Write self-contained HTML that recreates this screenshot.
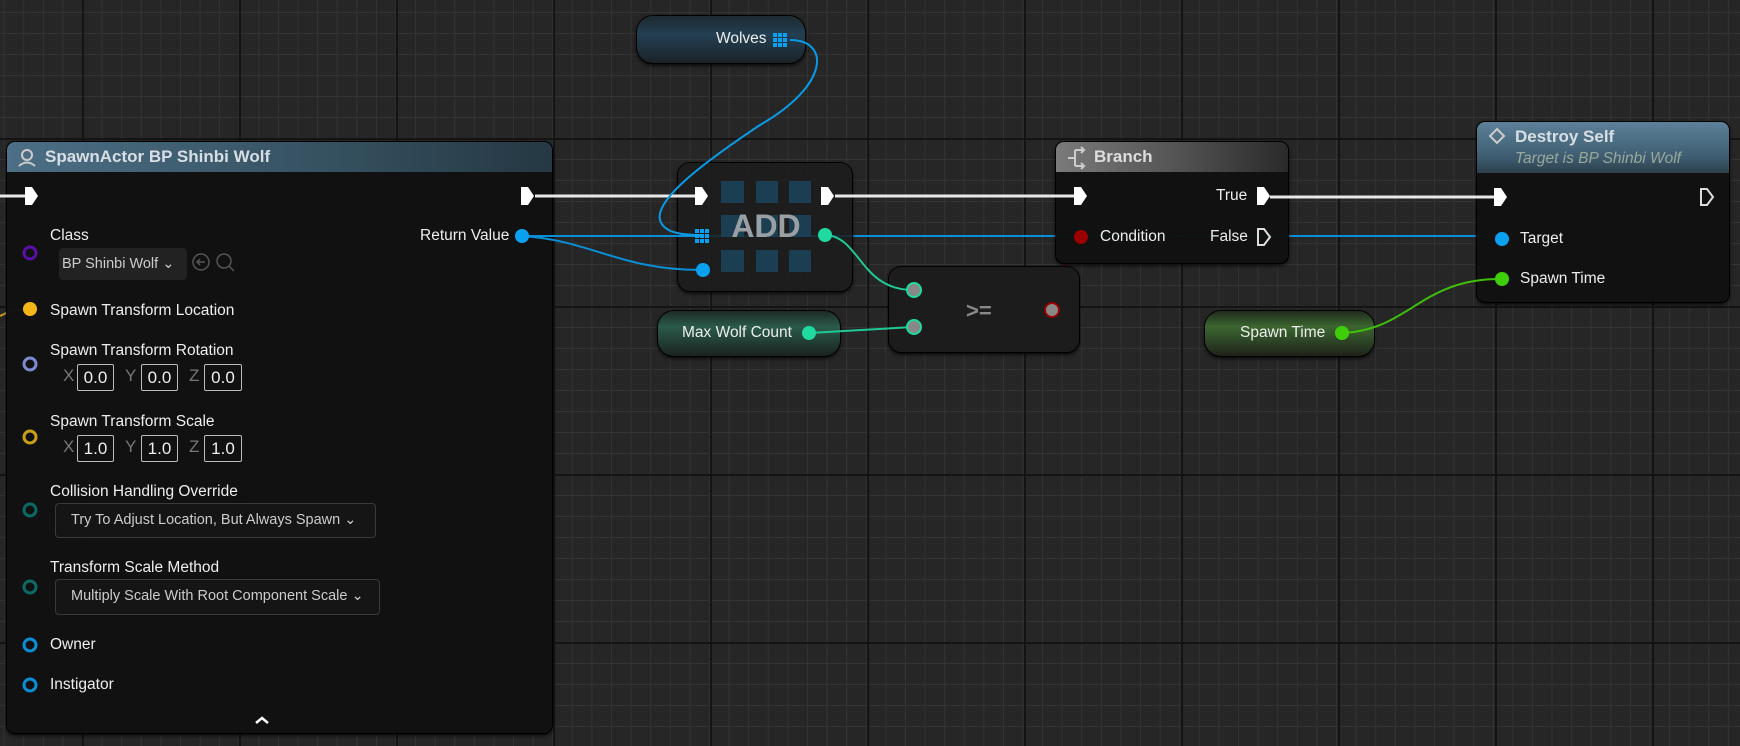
<!DOCTYPE html>
<html><head><meta charset="utf-8"><style>
*{margin:0;padding:0;box-sizing:border-box}
body{width:1740px;height:746px;overflow:hidden;position:relative;background:#262626;font-family:"Liberation Sans",sans-serif;color:#e6e6e6;
background-image:
linear-gradient(to right,#141414 2px,transparent 2px),
linear-gradient(to bottom,#141414 2px,transparent 2px),
linear-gradient(to right,#333 1px,transparent 1px),
linear-gradient(to bottom,#333 1px,transparent 1px);
background-size:157px 168px,157px 168px,19.6px 21px,19.6px 21px;
background-position:82px 0,0 138px,82px 0,0 138px;}
.n{position:absolute;background:rgba(16,17,16,.97);border-radius:8px;box-shadow:0 2px 4px #000,0 0 0 1px #000;}
.hd{position:absolute;left:0;right:0;top:0;border-radius:8px 8px 0 0;}
.t{position:absolute;font-size:15.5px;white-space:nowrap;color:#eee}
.pill{position:absolute;border-radius:16px;background:#181a19;box-shadow:0 2px 4px #000,0 0 0 1px #000;overflow:hidden}
.box{position:absolute;border:1px solid #bbb;border-radius:2px;height:27px;font-size:17px;text-align:center;line-height:25px;color:#eee}
.dd{position:absolute;border:1px solid #3a3a3a;border-radius:4px;background:#141514;font-size:14.5px;color:#ccc;padding-left:15px;line-height:33px}
svg{position:absolute;left:0;top:0}
</style></head><body>

<svg width="1740" height="746">
 <g fill="none" stroke-width="2">
  <path d="M0 316 Q10 310 25 309" stroke="#c9a020"/>
  <path d="M522 236 H1500" stroke="#0a8fd6"/>
  <path d="M1052 310 C1068 300,1060 250,1079 236" stroke="#8a0000"/>
 </g>
</svg>

<!-- SpawnActor node -->
<div class="n" style="left:7px;top:142px;width:545px;height:591px">
 <div class="hd" style="height:30px;background:linear-gradient(to right,#4c6f86,#35505f 60%,#253843)"></div>
 <div class="t" style="left:38px;top:5px;font-size:17px;font-weight:bold;color:#d8dfe4">SpawnActor BP Shinbi Wolf</div>
 <div class="t" style="left:43px;top:85px">Class</div>
 <div class="dd" style="left:52px;top:106px;width:128px;height:32px;border:none;background:#222;line-height:32px;padding-left:3px">BP Shinbi Wolf ⌄</div>
 <div class="t" style="left:43px;top:160px">Spawn Transform Location</div>
 <div class="t" style="left:43px;top:200px">Spawn Transform Rotation</div>
 <div class="t" style="left:56px;top:224px;font-size:17px;color:#777">X</div>
 <div class="box" style="left:70px;top:222px;width:37px">0.0</div>
 <div class="t" style="left:118px;top:224px;font-size:17px;color:#777">Y</div>
 <div class="box" style="left:134px;top:222px;width:37px">0.0</div>
 <div class="t" style="left:182px;top:224px;font-size:17px;color:#777">Z</div>
 <div class="box" style="left:197px;top:222px;width:38px">0.0</div>
 <div class="t" style="left:43px;top:271px">Spawn Transform Scale</div>
 <div class="t" style="left:56px;top:295px;font-size:17px;color:#777">X</div>
 <div class="box" style="left:70px;top:293px;width:37px">1.0</div>
 <div class="t" style="left:118px;top:295px;font-size:17px;color:#777">Y</div>
 <div class="box" style="left:134px;top:293px;width:37px">1.0</div>
 <div class="t" style="left:182px;top:295px;font-size:17px;color:#777">Z</div>
 <div class="box" style="left:197px;top:293px;width:38px">1.0</div>
 <div class="t" style="left:43px;top:341px">Collision Handling Override</div>
 <div class="dd" style="left:48px;top:361px;width:321px;height:35px">Try To Adjust Location, But Always Spawn ⌄</div>
 <div class="t" style="left:43px;top:417px">Transform Scale Method</div>
 <div class="dd" style="left:48px;top:437px;width:325px;height:36px">Multiply Scale With Root Component Scale ⌄</div>
 <div class="t" style="left:43px;top:494px">Owner</div>
 <div class="t" style="left:43px;top:534px">Instigator</div>
 <div class="t" style="left:413px;top:85px">Return Value</div>
</div>

<!-- Wolves -->
<div class="pill" style="left:637px;top:16px;width:168px;height:47px;background:linear-gradient(to bottom,#1d2a31,#233f52 40%,#1b2226)"></div>
<div class="t" style="left:716px;top:30px">Wolves</div>

<!-- ADD -->
<div class="n" style="left:678px;top:163px;width:174px;height:128px;border-radius:12px;background:rgba(27,28,27,.85)"></div>
<!-- Branch -->
<div class="n" style="left:1056px;top:142px;width:232px;height:121px">
 <div class="hd" style="height:30px;background:linear-gradient(to right,#7a7a7a,#555 50%,#2a2a2a)"></div>
 <div class="t" style="left:38px;top:5px;font-size:17px;font-weight:bold;color:#ddd">Branch</div>
 <div class="t" style="left:44px;top:86px">Condition</div>
 <div class="t" style="left:160px;top:45px">True</div>
 <div class="t" style="left:154px;top:86px">False</div>
</div>
<!-- >= -->
<div class="n" style="left:889px;top:267px;width:190px;height:85px;border-radius:12px;background:#1b1c1b"></div>
<div class="t" style="left:966px;top:298px;font-size:22px;font-weight:bold;color:#888">&gt;=</div>
<!-- Max wolf count -->
<div class="pill" style="left:658px;top:311px;width:182px;height:45px;background:linear-gradient(to bottom,#1d2a26,#2a5a4b 35%,#1b2220)"></div>
<div class="t" style="left:682px;top:324px">Max Wolf Count</div>
<!-- Spawn time pill -->
<div class="pill" style="left:1205px;top:311px;width:169px;height:45px;background:linear-gradient(to bottom,#1f2a1c,#3c6630 35%,#1d221b)"></div>
<div class="t" style="left:1240px;top:324px">Spawn Time</div>
<!-- Destroy Self -->
<div class="n" style="left:1477px;top:122px;width:252px;height:180px">
 <div class="hd" style="height:51px;background:linear-gradient(to bottom,#5d8199,#3d5c70 70%,#2c3f4a)"></div>
 <div class="t" style="left:38px;top:5px;font-size:17px;font-weight:bold;color:#d8dfe4">Destroy Self</div>
 <div class="t" style="left:38px;top:28px;font-style:italic;color:#9aa89a">Target is BP Shinbi Wolf</div>
 <div class="t" style="left:43px;top:108px">Target</div>
 <div class="t" style="left:43px;top:148px">Spawn Time</div>
</div>

<svg width="1740" height="746">
 <g fill="#1d4258" opacity=".9">
  <rect x="721" y="181" width="23" height="22"/><rect x="756" y="181" width="22" height="22"/><rect x="789" y="181" width="22" height="22"/>
  <rect x="721" y="215" width="23" height="22"/><rect x="756" y="215" width="22" height="22"/><rect x="789" y="215" width="22" height="22"/>
  <rect x="721" y="250" width="23" height="22"/><rect x="756" y="250" width="22" height="22"/><rect x="789" y="250" width="22" height="22"/>
 </g>
 <text x="766" y="237" text-anchor="middle" font-family="Liberation Sans" font-weight="bold" font-size="32" fill="#9a9fa3">ADD</text>
 <g fill="none" stroke-width="3" stroke="#e8e8e8">
  <path d="M0 196H25"/><path d="M535 196H701"/><path d="M835 196H1080"/><path d="M1270 197H1500"/>
 </g>
 <g fill="none" stroke-width="2">
  <path d="M522 236 H700" stroke="#0a8fd6"/>
  <path d="M522 236 C590 240,620 270,701 270" stroke="#0a8fd6"/>
  <path d="M790 40 C830 40,830 85,760 125 C700 165,655 200,660 220 C664 234,685 235,701 235" stroke="#0a9be6"/>
  <path d="M825 235 C860 236,860 290,913 290" stroke="#1fc996"/>
  <path d="M809 333 L913 327" stroke="#1fc996"/>
  <path d="M1342 333 C1410 330,1420 279,1500 279" stroke="#3fbf0a"/>
 </g>
 <g fill="#fff">
  <path d="M25 187h7l6 9l-6 9h-7z"/><path d="M521 187h7l6 9l-6 9h-7z"/>
  <path d="M695 187h7l6 9l-6 9h-7z"/><path d="M821 187h7l6 9l-6 9h-7z"/>
  <path d="M1074 187h7l6 9l-6 9h-7z"/><path d="M1257 187h7l6 9l-6 9h-7z"/>
  <path d="M1494 188h7l6 9l-6 9h-7z"/>
 </g>
 <g fill="none" stroke="#ddd" stroke-width="2">
  <path d="M1258 229h6l6 8l-6 8h-6z"/><path d="M1701 189h6l6 8l-6 8h-6z"/>
 </g>
 <g stroke-width="3" fill="none">
  <circle cx="30" cy="253" r="6" stroke="#5a0fa8"/>
  <circle cx="30" cy="364" r="6" stroke="#7d8ad0"/>
  <circle cx="30" cy="437" r="6" stroke="#c9a018"/>
  <circle cx="30" cy="510" r="6" stroke="#0a6a66"/>
  <circle cx="30" cy="587" r="6" stroke="#0a6a66"/>
  <circle cx="30" cy="645" r="6" stroke="#0a8fd6"/>
  <circle cx="30" cy="685" r="6" stroke="#0a8fd6"/>
 </g>
 <circle cx="30" cy="309" r="7" fill="#f2b618"/>
 <circle cx="522" cy="236" r="7" fill="#0aa0f0"/>
 <circle cx="703" cy="270" r="7" fill="#0aa0f0"/>
 <circle cx="1081" cy="237" r="7" fill="#9a0000"/>
 <circle cx="1502" cy="239" r="7" fill="#0aa0f0"/>
 <circle cx="1502" cy="279" r="7" fill="#3fcf0a"/>
 <circle cx="1342" cy="333" r="7" fill="#3fcf0a"/>
 <circle cx="825" cy="235" r="7" fill="#1fd9a0"/>
 <circle cx="809" cy="333" r="7" fill="#1fd9a0"/>
 <circle cx="914" cy="290" r="7" fill="#888" stroke="#1fd9a0" stroke-width="2"/>
 <circle cx="914" cy="327" r="7" fill="#888" stroke="#1fd9a0" stroke-width="2"/>
 <circle cx="1052" cy="310" r="7" fill="#888" stroke="#9a0000" stroke-width="2"/>
 <g fill="#0aa0f0">
  <rect x="695" y="229" width="4" height="4"/><rect x="700" y="229" width="4" height="4"/><rect x="705" y="229" width="4" height="4"/>
  <rect x="695" y="234" width="4" height="4"/><rect x="700" y="234" width="4" height="4"/><rect x="705" y="234" width="4" height="4"/>
  <rect x="695" y="239" width="4" height="4"/><rect x="700" y="239" width="4" height="4"/><rect x="705" y="239" width="4" height="4"/>
  <rect x="773" y="33" width="4" height="4"/><rect x="778" y="33" width="4" height="4"/><rect x="783" y="33" width="4" height="4"/>
  <rect x="773" y="38" width="4" height="4"/><rect x="778" y="38" width="4" height="4"/><rect x="783" y="38" width="4" height="4"/>
  <rect x="773" y="43" width="4" height="4"/><rect x="778" y="43" width="4" height="4"/><rect x="783" y="43" width="4" height="4"/>
 </g>
 <g fill="none" stroke="#ccc" stroke-width="2">
  <circle cx="27" cy="155" r="5"/><path d="M19 166 q8-7 16 0"/>
  <path d="M1068 158h7M1075 150h9M1075 166h9M1075 150v16M1081 147l3 3l-3 3M1081 163l3 3l-3 3"/>
  <path d="M1497 129l7 7l-7 7l-7-7z"/>
  <path d="M256 723l6-5l6 5" stroke="#fff" stroke-width="2.5"/>
 </g>
 <g fill="none" stroke="#555" stroke-width="1.5">
  <circle cx="201" cy="262" r="8"/><path d="M205 262h-8m3-3l-3 3l3 3"/>
  <circle cx="224" cy="261" r="7"/><path d="M229 266l5 5"/>
 </g>
</svg>
</body></html>
